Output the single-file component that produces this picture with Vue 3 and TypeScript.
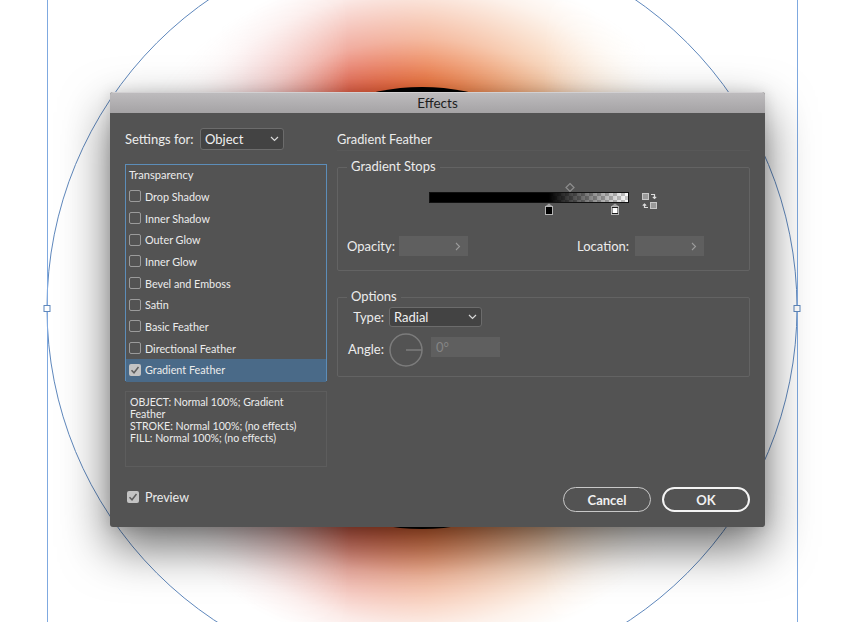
<script setup lang="ts">
const effects = [
  'Drop Shadow',
  'Inner Shadow',
  'Outer Glow',
  'Inner Glow',
  'Bevel and Emboss',
  'Satin',
  'Basic Feather',
  'Directional Feather',
]
</script>

<template>
  <div class="page">
    <!-- artwork behind the dialog -->
    <svg class="art" width="850" height="622" viewBox="0 0 850 622">
      <defs>
        <linearGradient id="hues" gradientUnits="userSpaceOnUse" x1="130" y1="0" x2="690" y2="0">
          <stop offset="0" stop-color="#e8a0a0" stop-opacity="0" />
          <stop offset="0.12" stop-color="#e8a0a0" stop-opacity="0.3" />
          <stop offset="0.22" stop-color="#e58a8a" stop-opacity="0.75" />
          <stop offset="0.39" stop-color="#e0492c" />
          <stop offset="0.53" stop-color="#e8662c" />
          <stop offset="0.74" stop-color="#f0a268" />
          <stop offset="0.88" stop-color="#f6d8b4" stop-opacity="0.75" />
          <stop offset="1" stop-color="#fbeedd" stop-opacity="0" />
        </linearGradient>
        <radialGradient id="fade" gradientUnits="userSpaceOnUse" cx="422" cy="308" r="345">
          <stop offset="0.62" stop-color="#fff" />
          <stop offset="0.78" stop-color="#fff" stop-opacity="0.45" />
          <stop offset="0.92" stop-color="#fff" stop-opacity="0.12" />
          <stop offset="1" stop-color="#fff" stop-opacity="0" />
        </radialGradient>
        <mask id="feather" maskUnits="userSpaceOnUse" x="0" y="0" width="850" height="622">
          <rect width="850" height="622" fill="url(#fade)" />
        </mask>
      </defs>
      <rect width="850" height="622" fill="url(#hues)" mask="url(#feather)" />
      <circle cx="422" cy="308" r="221" fill="#000" />
      <circle cx="422" cy="308" r="375" fill="none" stroke="#5f88bd" stroke-width="1" />
      <path d="M47.5 0V622M797.5 0V622" stroke="#7fa9e0" stroke-width="1" fill="none" />
      <rect x="44" y="305.500" width="6" height="6" fill="#fff" stroke="#5f88bd" />
      <rect x="794" y="305.500" width="6" height="6" fill="#fff" stroke="#5f88bd" />
    </svg>

    <section class="dialog">
      <header class="title">Effects</header>
      <div class="body">
        <div class="left">
          <div class="settings">
            <span class="settings-label">Settings for:</span>
            <div class="select object">
              <span>Object</span>
              <svg class="chev" width="9" height="6" viewBox="0 0 9 6"><path d="M1 1l3.500 3.500L8 1" /></svg>
            </div>
          </div>

          <div class="list">
            <div class="row plain">Transparency</div>
            <div v-for="name in effects" :key="name" class="row">
              <span class="check" />
              <span>{{ name }}</span>
            </div>
            <div class="row active">
              <span class="check on">
                <svg width="12" height="12" viewBox="0 0 12 12"><path d="M2.500 6.200l2.500 2.600L9.500 3" /></svg>
              </span>
              <span>Gradient Feather</span>
            </div>
          </div>

          <div class="summary">
            OBJECT: Normal 100%; Gradient Feather<br>
            STROKE: Normal 100%; (no effects)<br>
            FILL: Normal 100%; (no effects)
          </div>

          <div class="preview">
            <span class="check on">
              <svg width="12" height="12" viewBox="0 0 12 12"><path d="M2.500 6.200l2.500 2.600L9.500 3" /></svg>
            </span>
            <span>Preview</span>
          </div>
        </div>

        <div class="right">
          <h2 class="heading">Gradient Feather</h2>

          <fieldset class="group stops">
            <legend>Gradient Stops</legend>
            <svg class="ramp" width="240" height="38" viewBox="0 0 240 38">
              <defs>
                <pattern id="checker" patternUnits="userSpaceOnUse" width="8" height="8">
                  <rect width="8" height="8" fill="#fff" />
                  <rect width="4" height="4" fill="#c9c9c9" />
                  <rect x="4" y="4" width="4" height="4" fill="#c9c9c9" />
                </pattern>
                <linearGradient id="ink" x1="0" y1="0" x2="1" y2="0">
                  <stop offset="0.6" stop-color="#000" />
                  <stop offset="1" stop-color="#000" stop-opacity="0" />
                </linearGradient>
              </defs>
              <rect x="4.500" y="12.500" width="199" height="10" fill="url(#checker)" />
              <rect x="4.500" y="12.500" width="199" height="10" fill="url(#ink)" stroke="#111" />
              <path d="M145 3.500l4 4-4 4-4-4z" fill="none" stroke="#8e8e8e" stroke-width="1.200" />
              <path d="M120 26.500l4-3 4 3z" fill="#a2a2a2" />
              <rect x="120.500" y="26.500" width="7" height="8" fill="#000" stroke="#b4b4b4" />
              <path d="M186 26.500l4-3 4 3z" fill="#a2a2a2" />
              <rect x="186.500" y="26.500" width="7" height="8" fill="#1c1c1c" stroke="#b4b4b4" />
              <rect x="187.500" y="28" width="5" height="5" fill="#fff" />
              <rect x="217.500" y="13.500" width="6" height="6" fill="#9a9a9a" stroke="#c8c8c8" />
              <rect x="225.500" y="22.500" width="6" height="6" fill="#9a9a9a" stroke="#c8c8c8" />
              <path d="M226 14.500h3.500v3.500M227.800 16.800l1.700 1.700 1.700-1.700M223 27.500h-3.500V24M217.800 25.700l1.700-1.700 1.700 1.700" fill="none" stroke="#dcdcdc" stroke-width="1.200" />
            </svg>

            <div class="values">
              <label class="lbl opacity">Opacity:</label>
              <div class="field">
                <svg width="6" height="9" viewBox="0 0 6 9"><path d="M1 1l3.500 3.500L1 8" /></svg>
              </div>
              <label class="lbl location">Location:</label>
              <div class="field">
                <svg width="6" height="9" viewBox="0 0 6 9"><path d="M1 1l3.500 3.500L1 8" /></svg>
              </div>
            </div>
          </fieldset>

          <fieldset class="group options">
            <legend>Options</legend>
            <div class="opt-row">
              <label class="lbl name">Type:</label>
              <div class="select radial">
                <span>Radial</span>
                <svg class="chev" width="9" height="6" viewBox="0 0 9 6"><path d="M1 1l3.500 3.500L8 1" /></svg>
              </div>
            </div>
            <div class="opt-row angle">
              <label class="lbl name">Angle:</label>
              <svg class="dial" width="34" height="34" viewBox="0 0 34 34">
                <circle cx="17" cy="17" r="16" />
                <path d="M17 17H33" />
              </svg>
              <div class="field degree">0°</div>
            </div>
          </fieldset>

          <div class="actions">
            <button class="btn" type="button">Cancel</button>
            <button class="btn primary" type="button">OK</button>
          </div>
        </div>
      </div>
    </section>
  </div>
</template>

<style>
html, body {
  margin: 0;
  background: #fff;
}
</style>

<style scoped>
.page {
  position: relative;
  width: 850px;
  height: 622px;
  overflow: hidden;
  font-family: Lato, "Open Sans", sans-serif;
  font-size: 10.8px;
  color: #ececec;
}

.art {
  position: absolute;
  top: 0;
  left: 0;
}

.dialog {
  position: absolute;
  top: 92px;
  left: 110px;
  width: 655px;
  height: 435px;
  border-radius: 3px;
  background: #535353;
  box-shadow: 0 20px 48px rgba(0, 0, 0, 0.58), 0 0 14px rgba(0, 0, 0, 0.12);
  overflow: hidden;
}

.title {
  height: 21px;
  line-height: 20px;
  text-align: center;
  font-size: 13.5px;
  color: #1e1e1e;
  background: linear-gradient(#bdbbbd, #a5a3a5);
  border-top: 1px solid #d2d0d2;
  box-sizing: border-box;
}

.body {
  display: grid;
  grid-template-columns: 202px 413px;
  column-gap: 10px;
  padding: 15px;
  height: 414px;
  box-sizing: border-box;
}

.settings {
  display: flex;
  align-items: center;
  height: 22px;
  font-size: 13px;
}

.settings-label {
  width: 75px;
}

.select {
  display: flex;
  align-items: center;
  justify-content: space-between;
  box-sizing: border-box;
  border: 1px solid #6c6c6c;
  border-radius: 3px;
  background: #434343;
  padding: 0 4px;
  font-size: 13px;
  color: #f0f0f0;
}

.object {
  width: 84px;
  height: 22px;
}

.radial {
  width: 93px;
  height: 20px;
}

.chev path {
  fill: none;
  stroke: #d8d8d8;
  stroke-width: 1.2;
}

.list {
  margin-top: 14px;
  height: 217px;
  box-sizing: border-box;
  border: 1px solid #5c8db9;
}

.row {
  display: flex;
  align-items: center;
  gap: 4px;
  height: 21.67px;
  padding-left: 3px;
}

.plain {
  height: 20.67px;
  box-sizing: border-box;
  padding: 0 0 2px 3px;
  font-size: 11.1px;
}

.active {
  height: 22.67px;
  padding-bottom: 1px;
  box-sizing: border-box;
  background: #4a6a88;
}

.check {
  flex: none;
  display: block;
  box-sizing: border-box;
  width: 12px;
  height: 12px;
  border: 1px solid #9b9b9b;
  border-radius: 2px;
}

.check.on {
  border: 0;
  background: #c3c3c3;
}

.check svg {
  display: block;
}

.check path {
  fill: none;
  stroke: #5e5e5e;
  stroke-width: 1.5;
}

.summary {
  margin-top: 10px;
  height: 76px;
  box-sizing: border-box;
  border: 1px solid #5d5d5d;
  padding: 4px 24px 4px 4px;
  line-height: 12px;
  font-size: 10.6px;
}

.preview {
  display: flex;
  align-items: center;
  gap: 6px;
  margin-top: 23px;
  height: 14px;
  padding-left: 2px;
  font-size: 12.5px;
}

.right {
  display: flex;
  flex-direction: column;
}

.heading {
  margin: 0;
  height: 22px;
  line-height: 23px;
  font-size: 12.8px;
  font-weight: 400;
  border-bottom: 1px solid #585858;
}

.group {
  margin: 0;
  padding: 0;
  box-sizing: border-box;
  border: 1px solid #636363;
  border-radius: 2px;
  min-width: 0;
}

.group legend {
  margin-left: 9px;
  padding: 0 4px 2px;
  font-size: 13px;
  line-height: 14px;
}

.stops {
  margin-top: 8px;
  height: 112px;
}

.ramp {
  display: block;
  margin: 5px 0 0 87px;
}

.values {
  display: flex;
  align-items: center;
  margin-top: 18px;
  padding-left: 9px;
}

.lbl {
  font-size: 13px;
}

.opacity {
  width: 52px;
}

.location {
  width: 58px;
  margin-left: 109px;
}

.field {
  display: flex;
  align-items: center;
  justify-content: flex-end;
  box-sizing: border-box;
  width: 69px;
  height: 20px;
  padding-right: 7px;
  background: #5f5f5f;
}

.field path {
  fill: none;
  stroke: #9a9a9a;
  stroke-width: 1.1;
}

.options {
  margin-top: 18px;
  height: 88px;
}

.opt-row {
  display: flex;
  align-items: center;
  gap: 5px;
  margin-top: 2px;
}

.name {
  width: 46px;
  text-align: right;
}

.angle {
  align-items: flex-start;
  margin-top: 6px;
}

.angle .name {
  margin-top: 8px;
}

.dial {
  flex: none;
  margin-right: 3px;
}

.dial circle,
.dial path {
  fill: none;
  stroke: #7c7c7c;
  stroke-width: 1.5;
}

.degree {
  justify-content: flex-start;
  margin-top: 4px;
  padding-left: 5px;
  font-size: 13px;
  color: #858585;
}

.actions {
  display: flex;
  justify-content: flex-end;
  gap: 11px;
  margin-top: auto;
}

.btn {
  width: 88px;
  height: 25px;
  padding: 0;
  box-sizing: border-box;
  border: 1.5px solid #c8c8c8;
  border-radius: 13px;
  background: transparent;
  color: #f0f0f0;
  font-family: inherit;
  font-size: 13px;
  font-weight: 700;
}

.primary {
  border: 2px solid #f4f4f4;
}
</style>
